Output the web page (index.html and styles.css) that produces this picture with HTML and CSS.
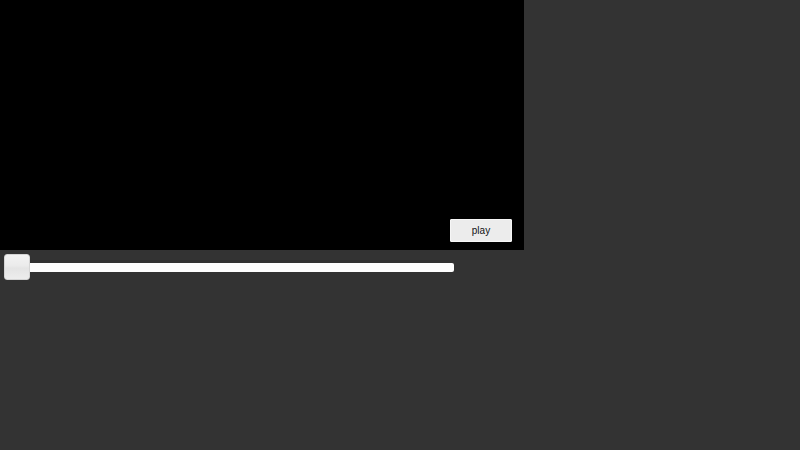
FILE: index.html
```html
<!DOCTYPE html>
<html>
<head>
<meta charset="utf-8">
<link rel="stylesheet" href="styles.css">
</head>
<body>
<div class="video">
  <button class="play">play</button>
</div>
<div class="slider">
  <div class="track"></div>
  <div class="thumb"></div>
</div>
</body>
</html>
```
FILE: styles.css
```css
html, body { margin: 0; padding: 0; }
body {
  background: #333333;
  width: 800px;
  height: 450px;
  font-family: "Liberation Sans", Arial, sans-serif;
}
.video {
  width: 524px;
  height: 250px;
  background: #000;
  display: flex;
  align-items: flex-end;
  justify-content: flex-end;
  box-sizing: border-box;
  padding: 0 12px 8px 0;
}
.play {
  width: 62px;
  height: 23px;
  border: 1px solid #f6f6f6;
  border-radius: 1px;
  background: #ececec;
  color: #111;
  font-family: "Liberation Sans", Arial, sans-serif;
  font-size: 10px;
  padding: 0;
}
.slider {
  position: relative;
  margin: 4px 0 0 4px;
  width: 450px;
  height: 26px;
  display: flex;
  align-items: center;
}
.track {
  width: 450px;
  height: 9px;
  background: #fff;
  border-radius: 2px;
}
.thumb {
  position: absolute;
  left: 0;
  top: 0;
  width: 26px;
  height: 26px;
  box-sizing: border-box;
  border: 1px solid #d4d4d4;
  border-radius: 3px;
  background: linear-gradient(#f3f3f3, #ebebeb 45%, #e4e4e4 55%, #ededed);
}
```
